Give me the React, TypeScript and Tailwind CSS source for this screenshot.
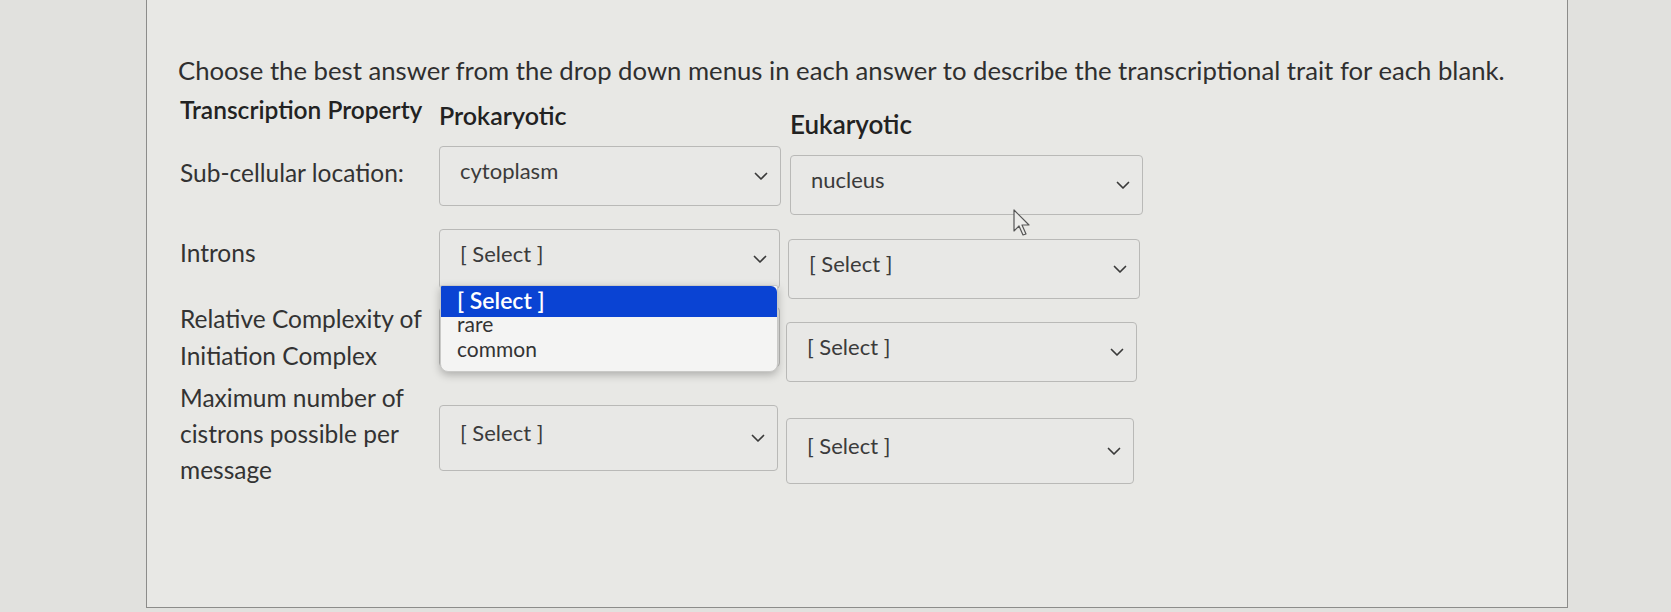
import React from 'react';

const font = { fontFamily: 'Lato, "Open Sans", sans-serif' };

const Chevron = () => (
  <svg width="14" height="9" viewBox="0 0 14 9" fill="none" className="shrink-0">
    <path d="M1.5 1.5 L7 7 L12.5 1.5" stroke="#3a3a3a" strokeWidth="1.7" strokeLinecap="round" strokeLinejoin="round" />
  </svg>
);

const SelectBox: React.FC<{ value: string; className?: string; covered?: boolean }> = ({ value, className = '', covered }) => (
  <div
    className={`shrink-0 flex items-center justify-between pl-5 pr-3 border border-[#b9b9b7] rounded-[4px] bg-[#e8e8e6] text-[22px] text-[#3b3b3b] ${className}`}
  >
    <span className={covered ? '-mt-3 invisible' : '-mt-3'}>{value}</span>
    <Chevron />
  </div>
);

export default function App() {
  return (
    <div className="w-[1671px] h-[612px] bg-[#e1e1de] overflow-hidden relative" style={font}>
      <div className="ml-[146px] w-[1422px] h-[608px] border-l border-r border-b border-[#8c8c8a] bg-[#e8e8e5] pl-[31px] pt-[54px] relative">
        <p className="text-[25.7px] leading-[32px] text-[#2f2f2f] whitespace-nowrap">
          Choose the best answer from the drop down menus in each answer to describe the transcriptional trait for each blank.
        </p>

        <div className="mt-[7px] flex items-start text-[#222] text-[25px] font-semibold leading-[34px]">
          <div className="w-[261px] pl-[2px] text-[24.5px]">Transcription Property</div>
          <div className="w-[351px] mt-[5px]">Prokaryotic</div>
          <div className="mt-[14px] text-[26px]">Eukaryotic</div>
        </div>

        <div className="flex items-start mt-[5px] text-[24.5px] text-[#333]">
          <div className="w-[261px] pl-[2px] leading-[34px] mt-[10px]">Sub-cellular location:</div>
          <SelectBox value="cytoplasm" className="w-[342px] h-[60px]" />
          <SelectBox value="nucleus" className="w-[353px] h-[60px] ml-[9px] mt-[9px]" />
        </div>

        <div className="flex items-start mt-[14px] text-[24.5px] text-[#333]">
          <div className="w-[261px] pl-[2px] leading-[34px] mt-[7px]">Introns</div>
          <SelectBox value="[ Select ]" className="w-[341px] h-[60px]" />
          <SelectBox value="[ Select ]" className="w-[352px] h-[60px] ml-[8px] mt-[10px]" />
        </div>

        <div className="flex items-start mt-[1px] text-[24.5px] text-[#333]">
          <div className="w-[261px] pl-[2px] leading-[37px]">
            Relative Complexity of
            <br />
            Initiation Complex
          </div>
          {/* sits under the open list */}
          <SelectBox value="[ Select ]" covered className="w-[341px] h-[60px] mt-[7px]" />
          <SelectBox value="[ Select ]" className="w-[351px] h-[60px] ml-[6px] mt-[22px]" />
        </div>

        <div className="flex items-start -mt-[2px] text-[24.5px] text-[#333]">
          <div className="w-[261px] pl-[2px] leading-[36px]">
            Maximum number of
            <br />
            cistrons possible per
            <br />
            message
          </div>
          <SelectBox value="[ Select ]" className="w-[339px] h-[66px] mt-[25px]" />
          <SelectBox value="[ Select ]" className="w-[348px] h-[66px] ml-[8px] mt-[38px]" />
        </div>

        {/* open dropdown list */}
        <div className="absolute left-[293px] top-[285px] w-[338px] h-[87px] bg-[#f4f4f3] rounded-b-[8px] rounded-t-[2px] shadow-[0_3px_8px_rgba(0,0,0,0.25)] border border-[#c9c9c7] overflow-hidden text-[21px] text-[#333]">
          <div className="h-[31px] bg-[#0a43d3] text-white text-[23px] font-semibold pl-4 leading-[28px] rounded-tr-[6px]">[ Select ]</div>
          <div className="pl-4 leading-[22px] -mt-[4px]">rare</div>
          <div className="pl-4 leading-[28px]">common</div>
        </div>

        {/* mouse pointer */}
        <svg className="absolute left-[866px] top-[209px]" width="24" height="30" viewBox="0 0 24 30" fill="none">
          <path d="M1 1 L1 22 L6 17 L10 26 L13 25 L9 16 L16 16 Z" fill="#ececea" stroke="#555" strokeWidth="1.2" strokeLinejoin="round" />
        </svg>
      </div>
    </div>
  );
}
